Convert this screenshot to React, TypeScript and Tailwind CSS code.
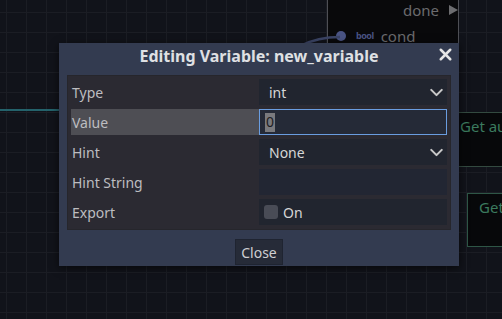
import { ChevronDown, X } from 'lucide-react';

type Row = {
  label: string;
  kind: 'select' | 'text' | 'check';
  value?: string;
  active?: boolean;
};

const rows: Row[] = [
  { label: 'Type', kind: 'select', value: 'int' },
  { label: 'Value', kind: 'text', value: '0', active: true },
  { label: 'Hint', kind: 'select', value: 'None' },
  { label: 'Hint String', kind: 'text' },
  { label: 'Export', kind: 'check', value: 'On' },
];

const Field = ({ row }: { row: Row }) => {
  if (row.kind === 'select') {
    return (
      <div className="flex h-[26px] items-center justify-between bg-[#21252f] pl-[10px] text-[#d6d6d6]">
        <span>{row.value}</span>
        <ChevronDown className="h-[21px] w-[21px] text-[#c9c9c9]" strokeWidth={2.4} />
      </div>
    );
  }
  if (row.kind === 'check') {
    return (
      <div className="flex h-[26px] items-center gap-[5px] bg-[#21252f] pl-[5px] text-[#d6d6d6]">
        <span className="h-[14px] w-[14px] rounded-[3px] bg-[#494c56]" />
        <span>{row.value}</span>
      </div>
    );
  }
  if (row.active) {
    return (
      <div className="flex h-[26px] items-center border border-[#6a9de0] bg-[#252a37] pl-[5px]">
        <span className="flex h-[19px] items-center bg-[#7a7a7e] px-[1px] leading-none text-[#1d1d22]">
          {row.value}
        </span>
      </div>
    );
  }
  return <div className="h-[26px] bg-[#222633]" />;
};

const Background = () => (
  <>
    {/* graph node at the top right */}
    <div className="absolute left-[327px] top-[-12px] flex h-[67px] w-[132px] flex-col border border-[#4e4f55] bg-[#09090b] pl-[8px] pt-[10px] text-[15px] text-[#6b6b6e]">
      <div className="flex items-center justify-end gap-[10px]">
        <span>done</span>
        <span className="h-0 w-0 border-y-[5px] border-l-[9px] border-y-transparent border-l-[#6d6d70]" />
      </div>
      <div className="mt-[3px] flex items-center">
        <span className="h-[10px] w-[10px] rounded-full bg-[#4a5484]" />
        <span className="ml-[10px] text-[9px] font-bold tracking-[-0.5px] text-[#4a5484]">bool</span>
        <span className="ml-[7px]">cond</span>
      </div>
    </div>
    <svg className="absolute left-0 top-0" width="502" height="319">
      <path d="M340 37 C 325 37, 312 40, 300 46" stroke="#3b4465" strokeWidth="2.5" fill="none" />
    </svg>

    {/* teal connection at the left */}
    <div className="absolute left-0 top-[109px] h-[2px] w-[60px] bg-[#24626b]" />

    {/* green nodes at the right */}
    <div className="absolute left-[430px] top-[112px] h-[55px] w-[90px] border border-[#334a40] bg-[#07080a] pl-[29px] pt-[2px] text-[15px] text-[#3b7a5e]">
      Get au
    </div>
    <div className="absolute left-[467px] top-[193px] h-[54px] w-[60px] border border-[#2e5646] bg-[#07080a] pl-[11px] pt-[2px] text-[15px] text-[#3b7a5e]">
      Get
    </div>
  </>
);

export default function App() {
  return (
    <div
      className="relative h-[319px] w-[502px] overflow-hidden bg-[#11131a] bg-[linear-gradient(to_right,#1b1d24_1px,transparent_1px),linear-gradient(to_bottom,#1b1d24_1px,transparent_1px)] bg-[size:20px_20px] bg-[position:6px_12px] text-[14px]"
      style={{ fontFamily: '"Noto Sans", "Open Sans", sans-serif' }}
    >
      <Background />

      {/* dialog window */}
      <div className="absolute left-[59px] top-[43px] flex h-[223px] w-[400px] flex-col items-center bg-[#333b50] shadow-[0_2px_8px_rgba(0,0,0,0.6)]">
        <div className="relative flex h-[32px] w-full items-center justify-center pb-[6px]">
          <span className="text-[16px] font-bold text-[#dfe0e3]">Editing Variable: new_variable</span>
          <X className="absolute right-[4px] top-[2px] h-[19px] w-[19px] text-[#e6e6e6]" strokeWidth={3.2} />
        </div>

        <div className="flex w-[384px] flex-col gap-[4px] border border-[#26262c] bg-[#2b2a32] px-[3px] pb-[4px] pt-[3px]">
          {rows.map((row) => (
            <div key={row.label} className="grid h-[26px] grid-cols-2">
              <div
                className={
                  row.active
                    ? 'flex items-center bg-[#4e4e54] pl-[1px] text-[#bdbdc0]'
                    : 'flex items-center pl-[1px] text-[#bdbdc0]'
                }
              >
                {row.label}
              </div>
              <Field row={row} />
            </div>
          ))}
        </div>

        <button className="mt-[9px] flex h-[26px] w-[48px] items-center justify-center border border-[#1f2431] bg-[#262b38] text-[#cfcfd2]">
          Close
        </button>
      </div>
    </div>
  );
}
